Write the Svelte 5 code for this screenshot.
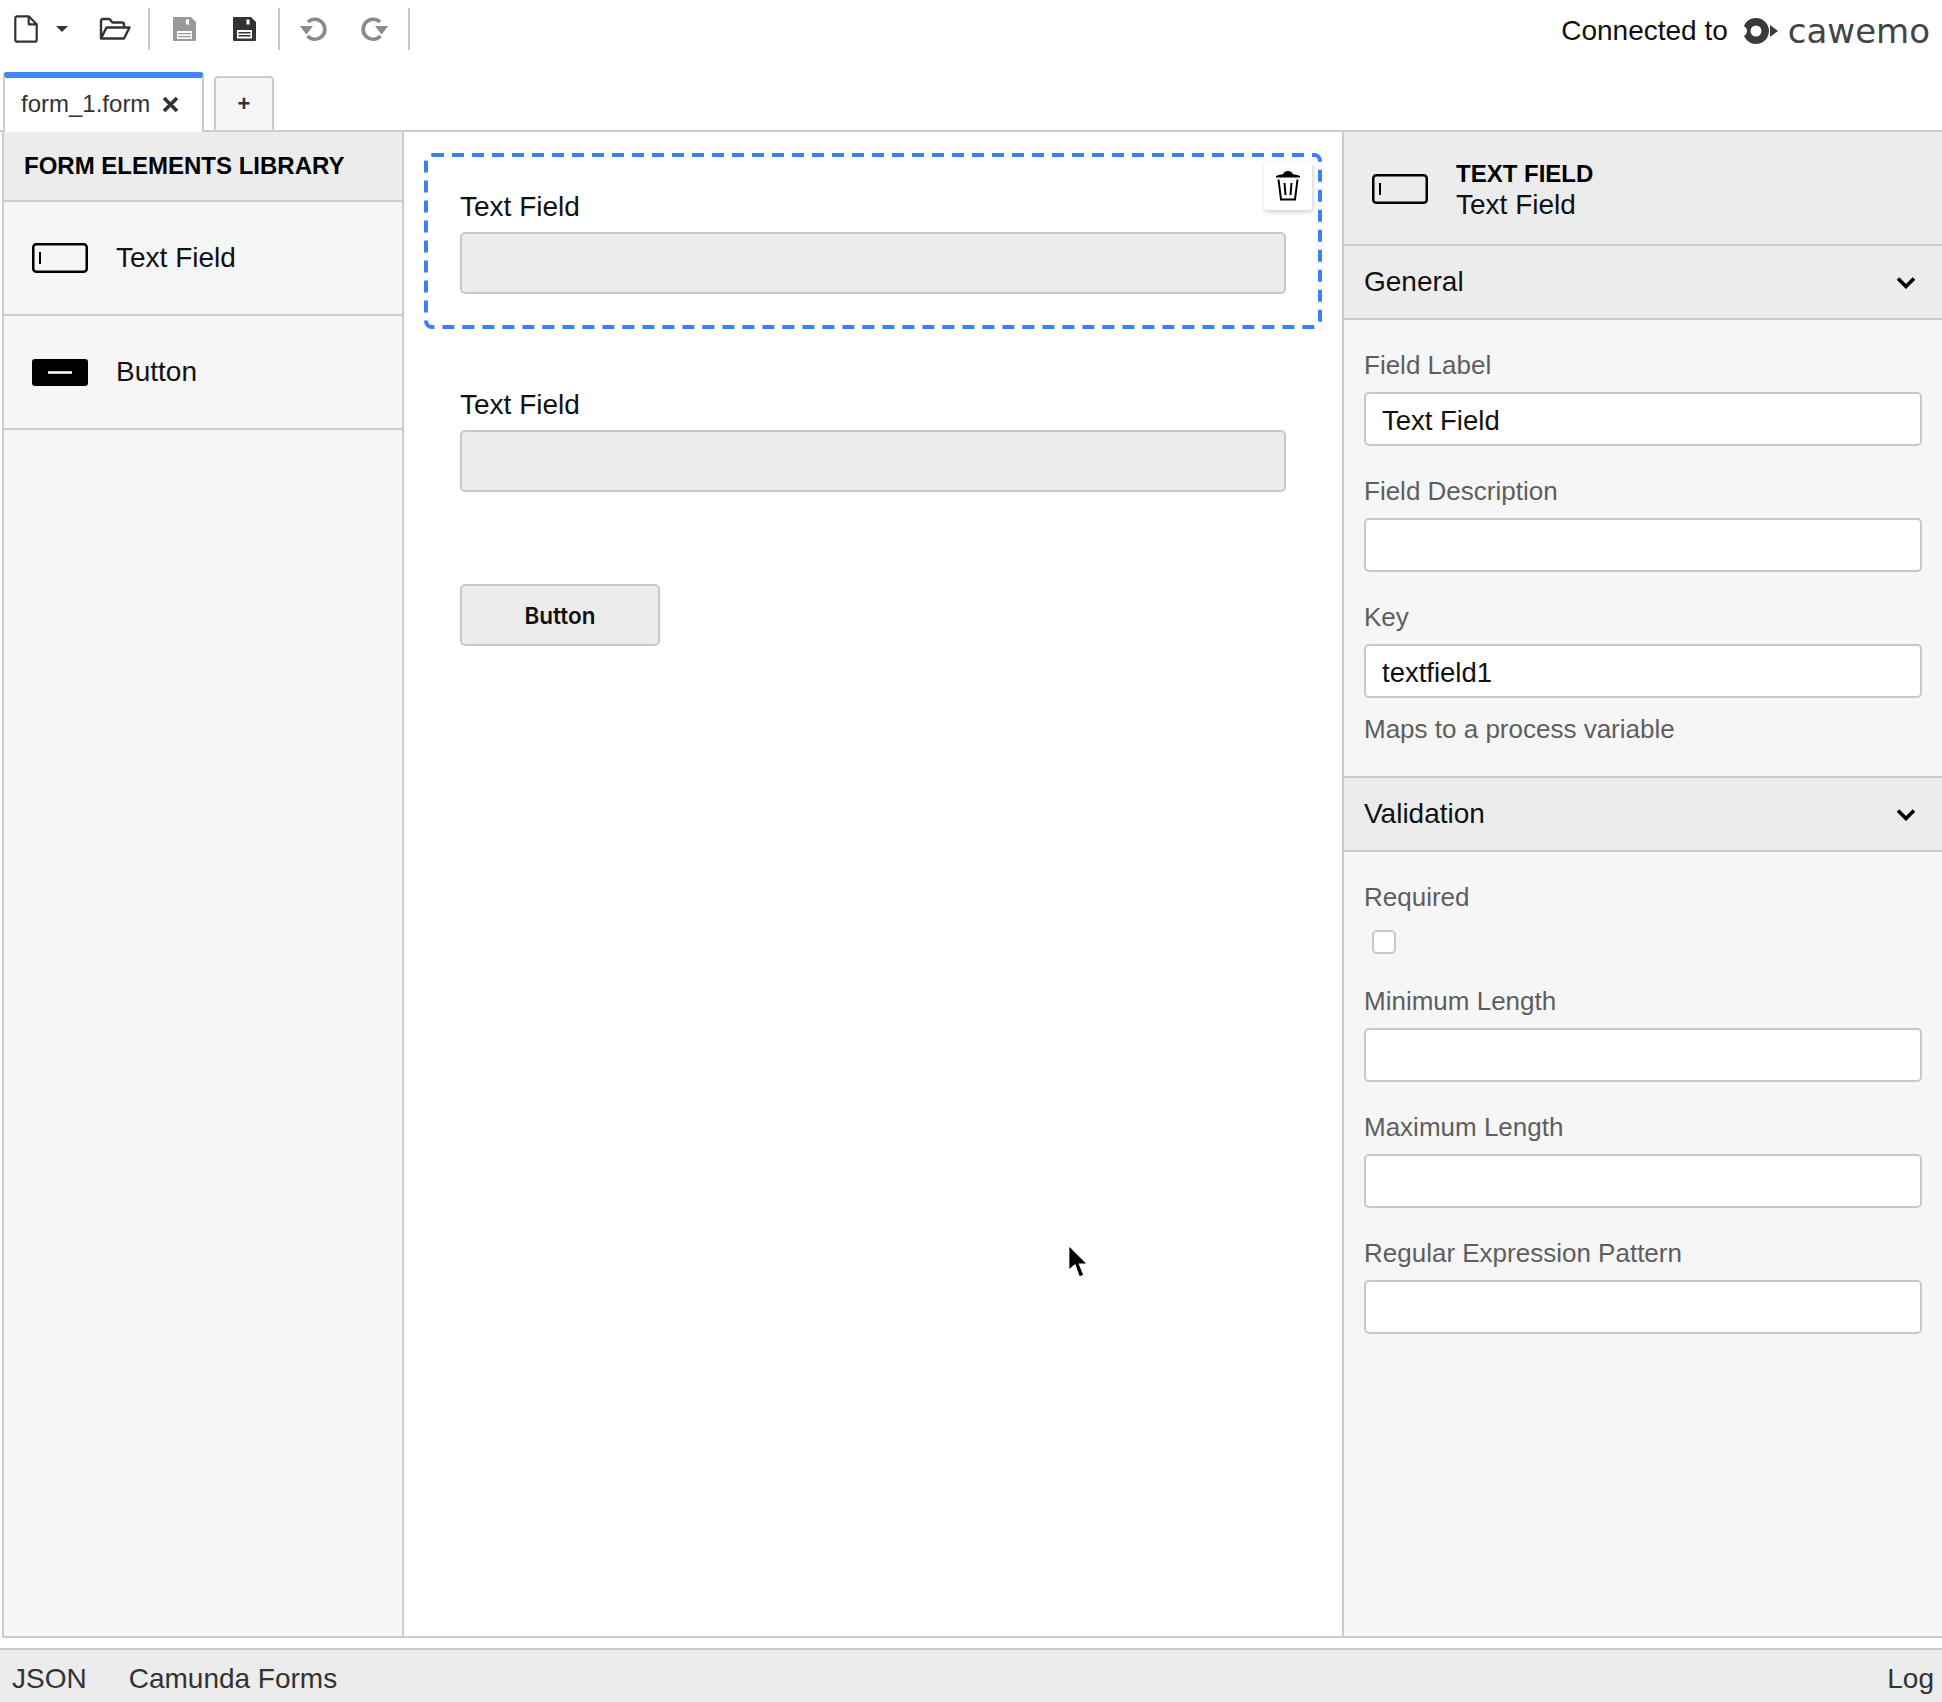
<script lang="ts">
  const generalFields = [
    { label: 'Field Label', value: 'Text Field' },
    { label: 'Field Description', value: '' },
    { label: 'Key', value: 'textfield1' }
  ];
  const validationFields = ['Minimum Length', 'Maximum Length', 'Regular Expression Pattern'];
</script>

<div class="app">
  <header class="toolbar">
    <div class="tools">
      <button class="tool file" aria-label="New file">
        <svg width="24" height="28" viewBox="0 0 24 28"><path d="M1.3 3.3a2 2 0 0 1 2-2h11.4l8 8v15.4a2 2 0 0 1-2 2h-17.400a2 2 0 0 1-2-2zM14.700 1.300v8h8" fill="none" stroke="#333" stroke-width="2.200" stroke-linejoin="round" /></svg>
      </button>
      <button class="tool caret" aria-label="More">
        <svg width="12" height="6" viewBox="0 0 12 6"><path d="M0 0h12L6 6z" fill="#333" /></svg>
      </button>
      <button class="tool wide" aria-label="Open">
        <svg width="32" height="24" viewBox="0 0 32 24"><path d="M2 21V4a2 2 0 0 1 2-2h6.500l3 3.500H23a2 2 0 0 1 2 2V10M2 21.500 7.500 10.500H30.500L25 21.500z" fill="none" stroke="#333" stroke-width="2.400" stroke-linejoin="round" /></svg>
      </button>
      <span class="sep"></span>
      <button class="tool" aria-label="Save">
        <svg width="23" height="24" viewBox="0 0 23 24"><path fill-rule="evenodd" d="M1 0h17l5 5v18a1 1 0 0 1-1 1H1a1 1 0 0 1-1-1V1a1 1 0 0 1 1-1zM4 14v8h15v-8zM5 16h13v1.300H5zM5 19h13v1.300H5zM13 2.500v5h3v-5z" fill="#999" /></svg>
      </button>
      <button class="tool" aria-label="Save as">
        <svg width="23" height="24" viewBox="0 0 23 24"><path fill-rule="evenodd" d="M1 0h17l5 5v18a1 1 0 0 1-1 1H1a1 1 0 0 1-1-1V1a1 1 0 0 1 1-1zM4 13v8.500h15V13zM5.500 15h12v1.500h-12zM5.500 18h12v1.500h-12zM13.500 2.500v5h3v-5z" fill="#333" /></svg>
      </button>
      <span class="sep"></span>
      <button class="tool" aria-label="Undo">
        <svg width="28" height="26" viewBox="0 0 28 26"><path d="M8 6A10 10 0 1 1 7.500 20" fill="none" stroke="#8a8a8a" stroke-width="3.600" /><path d="M0 10h13L6.300 18.500z" fill="#8a8a8a" /></svg>
      </button>
      <button class="tool" aria-label="Redo">
        <svg width="28" height="26" viewBox="0 0 28 26"><g transform="translate(28 0) scale(-1 1)"><path d="M8 6A10 10 0 1 1 7.500 20" fill="none" stroke="#8a8a8a" stroke-width="3.600" /><path d="M0 10h13L6.300 18.500z" fill="#8a8a8a" /></g></svg>
      </button>
      <span class="sep"></span>
    </div>
    <div class="connected">
      <span>Connected to</span>
      <svg class="logo" width="36" height="30" viewBox="0 0 36 30" aria-hidden="true">
        <path fill-rule="evenodd" d="M13 2a13 13 0 1 1-12 18c2-1.500 3-3 3-5s-1-3.500-3-5A13 13 0 0 1 13 2zm0 7.500a5.500 5.500 0 1 0 0 11 5.500 5.500 0 0 0 0-11z" fill="#3a3a3a" />
        <path d="M27 9l8 6-8 6z" fill="#3a3a3a" />
      </svg>
      <span class="wordmark">cawemo</span>
    </div>
  </header>

  <nav class="tabs">
    <div class="tab active">
      <span>form_1.form</span>
      <svg width="17" height="17" viewBox="0 0 17 17"><path d="M2 2l13 13M15 2 2 15" stroke="#333" stroke-width="3.600" /></svg>
    </div>
    <div class="tab add">+</div>
  </nav>

  <main class="workspace">
    <aside class="library">
      <h2 class="library-title">FORM ELEMENTS LIBRARY</h2>
      <div class="library-item">
        <svg class="type-icon" width="56" height="30" viewBox="0 0 56 30"><rect x="1.250" y="1.250" width="53.500" height="27.500" rx="3" fill="none" stroke="#000" stroke-width="2.500" /><path d="M8 9v12" stroke="#000" stroke-width="2" /></svg>
        <span>Text Field</span>
      </div>
      <div class="library-item">
        <svg class="type-icon" width="56" height="27" viewBox="0 0 56 27"><rect width="56" height="27" rx="3" fill="#000" /><path d="M16 13.500h24" stroke="#fff" stroke-width="2.500" /></svg>
        <span>Button</span>
      </div>
    </aside>

    <section class="canvas">
      <div class="form-field selected">
        <svg class="outline" width="898" height="176" aria-hidden="true"><rect x="2" y="2" width="894" height="172" rx="6" fill="none" stroke="#3b7ffa" stroke-width="4" stroke-dasharray="12 8" /></svg>
        <label class="field-label" for="field-a">Text Field</label>
        <input id="field-a" class="field-input" disabled />
        <button class="delete" aria-label="Delete">
          <svg width="24" height="30" viewBox="0 0 24 30"><path d="M0 6.500h24V5c-2.500-1-5-1.500-7-1.700C16 1 14.500 0 12 0S8 1 7 3.300C5 3.500 2.500 4 0 5z" fill="#000" /><path d="M2.500 8.500 5 28.500h14l2.500-20M8.500 12l1 12M15.500 12l-1 12" fill="none" stroke="#000" stroke-width="2" /></svg>
        </button>
      </div>
      <div class="form-field">
        <label class="field-label" for="field-b">Text Field</label>
        <input id="field-b" class="field-input" disabled />
      </div>
      <div class="form-field action">
        <button class="form-button">Button</button>
      </div>
    </section>

    <aside class="properties">
      <div class="props-head">
        <svg class="type-icon" width="56" height="30" viewBox="0 0 56 30"><rect x="1.250" y="1.250" width="53.500" height="27.500" rx="3" fill="none" stroke="#000" stroke-width="2.500" /><path d="M8 9v12" stroke="#000" stroke-width="2" /></svg>
        <div class="props-title">
          <strong>TEXT FIELD</strong>
          <span>Text Field</span>
        </div>
      </div>

      <div class="group-head">
        <span>General</span>
        <svg width="20" height="13" viewBox="0 0 20 13"><path d="M2 2.500 10 10.500 18 2.500" fill="none" stroke="#000" stroke-width="3.600" /></svg>
      </div>
      <div class="group-body general">
        {#each generalFields as field}
          <div class="prop">
            <label class="prop-label" for={field.label}>{field.label}</label>
            <input id={field.label} class="prop-input" value={field.value} />
          </div>
        {/each}
        <p class="hint">Maps to a process variable</p>
      </div>

      <div class="group-head">
        <span>Validation</span>
        <svg width="20" height="13" viewBox="0 0 20 13"><path d="M2 2.500 10 10.500 18 2.500" fill="none" stroke="#000" stroke-width="3.600" /></svg>
      </div>
      <div class="group-body">
        <div class="prop required">
          <label class="prop-label" for="required">Required</label>
          <input id="required" class="check" type="checkbox" />
        </div>
        {#each validationFields as label}
          <div class="prop">
            <label class="prop-label" for={label}>{label}</label>
            <input id={label} class="prop-input" />
          </div>
        {/each}
      </div>
    </aside>
  </main>

  <footer class="status">
    <span>JSON</span>
    <span>Camunda Forms</span>
    <span class="log">Log</span>
  </footer>

  <svg class="cursor" width="26" height="41" viewBox="0 0 24 38" aria-hidden="true"><path d="M3 2v25l6-5 4 11 5-2-4-10h8z" fill="#000" stroke="#fff" stroke-width="2" /></svg>
</div>

<style>
  :global(body) {
    margin: 0;
    background: #fff;
  }

  .app {
    position: relative;
    display: flex;
    flex-direction: column;
    height: 1702px;
    overflow: hidden;
    font-family: "Liberation Sans", Arial, sans-serif;
    font-size: 28px;
    color: #111;
  }

  button {
    font-family: inherit;
    padding: 0;
    border: 0;
    background: none;
  }

  .toolbar {
    display: flex;
    justify-content: space-between;
    height: 72px;
    flex: none;
  }

  .tools {
    display: flex;
    align-items: center;
    height: 42px;
    margin-top: 8px;
  }

  .tool {
    display: flex;
    align-items: center;
    justify-content: center;
    width: 60px;
    height: 42px;
  }

  .tool.file {
    width: 52px;
  }

  .tool.caret {
    width: 19px;
  }

  .tool.wide {
    width: 59px;
    margin-left: 14px;
  }

  .sep {
    width: 2px;
    height: 42px;
    margin: 0 4px;
    background: #c8c8c8;
  }

  .connected {
    display: flex;
    align-items: center;
    height: 62px;
    padding-right: 12px;
  }

  .logo {
    margin-left: 15px;
  }

  .wordmark {
    margin-left: 9px;
    font-family: "DejaVu Sans", sans-serif;
    font-size: 34px;
    line-height: 1;
    color: #444;
  }

  .tabs {
    display: flex;
    align-items: flex-end;
    gap: 10px;
    height: 60px;
    flex: none;
    padding-left: 3px;
    border-bottom: 2px solid #ccc;
    box-sizing: border-box;
  }

  .tab {
    box-sizing: border-box;
    border: 2px solid #ccc;
    border-bottom: 0;
    border-radius: 4px 4px 0 0;
  }

  .tab.active {
    display: flex;
    align-items: center;
    gap: 12px;
    width: 201px;
    height: 60px;
    margin-bottom: -2px;
    padding: 0 16px 2px;
    border-top: 6px solid #4285f4;
    background: #fff;
    font-size: 24px;
    color: #333;
  }

  .tab.add {
    display: flex;
    align-items: center;
    justify-content: center;
    width: 60px;
    height: 54px;
    background: #f6f6f6;
    font-size: 22px;
    font-weight: 700;
    color: #333;
  }

  .workspace {
    display: flex;
    height: 1506px;
    flex: none;
    margin-left: 2px;
    box-sizing: border-box;
    border-bottom: 2px solid #ccc;
  }

  .library {
    box-sizing: border-box;
    width: 402px;
    flex: none;
    border-left: 2px solid #ccc;
    border-right: 2px solid #ccc;
    background: #f6f6f6;
  }

  .library-title {
    box-sizing: border-box;
    height: 70px;
    margin: 0;
    padding-left: 20px;
    border-bottom: 2px solid #ccc;
    background: #ececec;
    font-size: 24px;
    line-height: 67px;
    font-weight: 700;
    color: #000;
  }

  .library-item {
    box-sizing: border-box;
    display: flex;
    align-items: center;
    gap: 28px;
    height: 114px;
    padding-left: 28px;
    border-bottom: 2px solid #ccc;
  }

  .canvas {
    display: flex;
    flex-direction: column;
    gap: 22px;
    flex: 1;
    padding: 21px 0 0 20px;
    background: #fff;
  }

  .form-field {
    position: relative;
    box-sizing: border-box;
    width: 898px;
    height: 176px;
    padding: 38px 36px 0;
  }

  .form-field.action {
    padding-top: 35px;
  }

  .outline {
    position: absolute;
    top: 0;
    left: 0;
  }

  .field-label {
    display: block;
    margin-bottom: 9px;
    line-height: 32px;
  }

  .field-input {
    box-sizing: border-box;
    display: block;
    width: 826px;
    height: 62px;
    border: 2px solid #c8c8c8;
    border-radius: 5px;
    background: #ececec;
  }

  .delete {
    position: absolute;
    top: 9px;
    right: 10px;
    display: flex;
    align-items: center;
    justify-content: center;
    width: 48px;
    height: 48px;
    background: #fff;
    border-radius: 2px;
    box-shadow: 1px 2px 5px rgba(0, 0, 0, 0.2);
  }

  .form-button {
    width: 200px;
    height: 62px;
    border: 2px solid #c8c8c8;
    border-radius: 5px;
    background: #ececec;
    font-family: Inter, sans-serif;
    font-size: 22.500px;
    font-weight: 600;
    color: #111;
  }

  .properties {
    box-sizing: border-box;
    width: 600px;
    flex: none;
    border-left: 2px solid #ccc;
    background: #f6f6f6;
  }

  .props-head {
    box-sizing: border-box;
    display: flex;
    align-items: center;
    gap: 28px;
    height: 114px;
    padding: 1px 0 0 28px;
    border-bottom: 2px solid #ccc;
    background: #ececec;
  }

  .props-title {
    display: flex;
    flex-direction: column;
  }

  .props-title strong {
    font-size: 24px;
    line-height: 31px;
    color: #000;
  }

  .props-title span {
    line-height: 31px;
  }

  .group-head {
    box-sizing: border-box;
    display: flex;
    align-items: center;
    justify-content: space-between;
    height: 74px;
    padding: 0 26px 0 20px;
    border-bottom: 2px solid #ccc;
    background: #ececec;
  }

  .group-body {
    padding: 29px 20px 0 20px;
  }

  .group-body.general {
    box-sizing: border-box;
    height: 458px;
    border-bottom: 2px solid #ccc;
  }

  .prop {
    margin-bottom: 29px;
  }

  .prop.required {
    margin-bottom: 31px;
  }

  .prop-label {
    display: block;
    font-size: 26px;
    line-height: 32px;
    margin-bottom: 11px;
    color: #5e5e5e;
  }

  .required .prop-label {
    margin-bottom: 17px;
  }

  .prop-input {
    box-sizing: border-box;
    display: block;
    width: 100%;
    height: 54px;
    padding: 3px 16px 0;
    border: 2px solid #c8c8c8;
    border-radius: 5px;
    background: #fff;
    font-family: inherit;
    font-size: 27.500px;
    color: #111;
  }

  .check {
    appearance: none;
    display: block;
    box-sizing: border-box;
    width: 24px;
    height: 24px;
    margin: 0 0 0 8px;
    border: 2px solid #c8c8c8;
    border-radius: 5px;
    background: #fff;
  }

  .hint {
    margin: -14px 0 0;
    font-size: 26px;
    line-height: 32px;
    color: #5e5e5e;
  }

  .status {
    box-sizing: border-box;
    display: flex;
    align-items: center;
    gap: 42px;
    height: 54px;
    margin-top: 10px;
    padding: 5px 8px 0 12px;
    border-top: 2px solid #ccc;
    background: #ececec;
    font-size: 28px;
    color: #333;
  }

  .log {
    margin-left: auto;
  }

  .cursor {
    position: absolute;
    top: 1242px;
    left: 1065px;
  }
</style>
